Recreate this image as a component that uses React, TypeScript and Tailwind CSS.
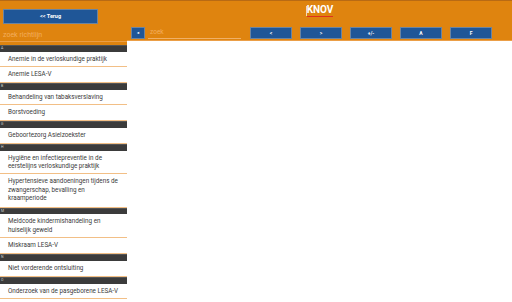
import React from 'react';

const groups: { letter: string; items: string[] }[] = [
  { letter: 'A', items: ['Anemie in de verloskundige praktijk', 'Anemie LESA-V'] },
  { letter: 'B', items: ['Behandeling van tabaksverslaving', 'Borstvoeding'] },
  { letter: 'G', items: ['Geboortezorg Asielzoekster'] },
  {
    letter: 'H',
    items: [
      'Hygiëne en infectiepreventie in de eerstelijns verloskundige praktijk',
      'Hypertensieve aandoeningen tijdens de zwangerschap, bevalling en kraamperiode',
    ],
  },
  { letter: 'M', items: ['Meldcode kindermishandeling en huiselijk geweld', 'Miskraam LESA-V'] },
  { letter: 'N', items: ['Niet vorderende ontsluiting'] },
  { letter: 'O', items: ['Onderzoek van de pasgeborene LESA-V', 'Opsporing van afwijkingen bij de pasgeborene'] },
];

const tools = ['<', '>', '+/-', 'A', 'F'];

const BlueButton = ({ label, className }: { label: string; className: string }) => (
  <button className={`flex items-center justify-center bg-[#1f5697] border border-[#6b84a0] text-white font-bold leading-none ${className}`}>
    {label}
  </button>
);

export default function App() {
  return (
    <div className="w-[512px] h-[302px] overflow-hidden bg-white flex font-['Roboto',sans-serif]">
      {/* left column */}
      <div className="w-[127px] shrink-0 flex flex-col">
        <div className="h-[45px] shrink-0 bg-[#df840f] border-t border-[#b86a14] flex flex-col">
          <BlueButton label="<< Terug" className="mt-[8px] ml-[3px] w-[95px] h-[15px] text-[5.5px]" />
          <div className="mt-[8px] ml-[3px] text-[7px] leading-none text-[#f3ae5e]">zoek richtlijn</div>
          <div className="mt-auto mb-[3px] h-px bg-[#eb9f48]" />
        </div>
        <div className="flex flex-col">
          {groups.map((g) => (
            <div key={g.letter} className="flex flex-col">
              <div className="h-[6.5px] shrink-0 bg-[#3b3b3b] border-t border-[#555] pl-[1px] text-[3.5px] leading-[5px] text-[#cfcfcf]">
                {g.letter}
              </div>
              {g.items.map((item, i) => (
                <div key={item} className="pb-0 border-b border-[#f2bf86]">
                  <div
                    className={
                      i === g.items.length - 1
                        ? 'pl-[8px] pr-[4px] pt-[3.25px] pb-[3.75px] text-[6.3px] leading-[8.5px] text-[#3a3a3a]'
                        : 'pl-[8px] pr-[4px] pt-[3.25px] pb-[2.25px] text-[6.3px] leading-[8.5px] text-[#3a3a3a]'
                    }
                  >
                    {item}
                  </div>
                </div>
              ))}
            </div>
          ))}
        </div>
      </div>

      {/* right column */}
      <div className="flex-1 flex flex-col">
        <div className="h-[41px] bg-[#df840f] border-t border-[#b86a14] flex flex-col">
          <div className="h-[19px] flex items-center justify-center">
            <div className="flex items-center">
              <span className="w-px h-[10px] bg-[#f6d7b0]" />
              <span className="text-[10px] leading-none font-bold text-white border-b border-[#e0301e] pb-px">KNOV</span>
            </div>
          </div>
          <div className="mt-[7px] flex items-center pl-[4px]">
            <BlueButton label="◂" className="w-[14px] h-[12px] text-[4px]" />
            <div className="ml-[3px] w-[93px] h-[12px] flex flex-col justify-center border-b border-[#f0b066]">
              <span className="pl-[2px] text-[6.5px] leading-none text-[#f3ae5e]">zoek</span>
            </div>
            <div className="ml-[9px] flex gap-[8px]">
              {tools.map((t) => (
                <BlueButton key={t} label={t} className="w-[42px] h-[12px] text-[5px]" />
              ))}
            </div>
          </div>
          <div className="mt-auto h-px bg-[#eb9f48]" />
        </div>
        <div className="flex-1 bg-white" />
      </div>
    </div>
  );
}
